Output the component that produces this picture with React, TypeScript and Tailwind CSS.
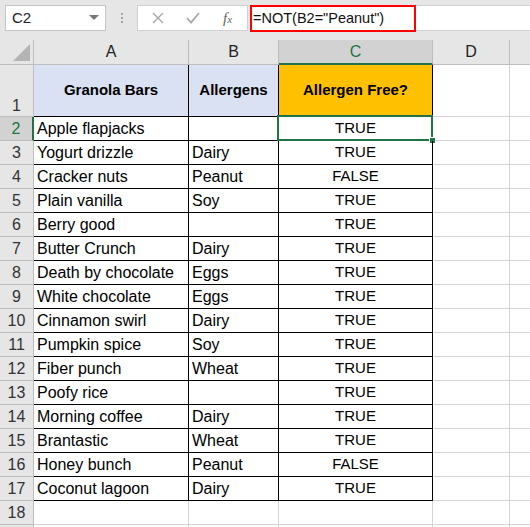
import React from "react";

const data: [string, string, string][] = [
  ["Apple flapjacks", "", "TRUE"],
  ["Yogurt drizzle", "Dairy", "TRUE"],
  ["Cracker nuts", "Peanut", "FALSE"],
  ["Plain vanilla", "Soy", "TRUE"],
  ["Berry good", "", "TRUE"],
  ["Butter Crunch", "Dairy", "TRUE"],
  ["Death by chocolate", "Eggs", "TRUE"],
  ["White chocolate", "Eggs", "TRUE"],
  ["Cinnamon swirl", "Dairy", "TRUE"],
  ["Pumpkin spice", "Soy", "TRUE"],
  ["Fiber punch", "Wheat", "TRUE"],
  ["Poofy rice", "", "TRUE"],
  ["Morning coffee", "Dairy", "TRUE"],
  ["Brantastic", "Wheat", "TRUE"],
  ["Honey bunch", "Peanut", "FALSE"],
  ["Coconut lagoon", "Dairy", "TRUE"],
];

function RowHeader({ n, selected }: { n: number; selected?: boolean }) {
  return (
    <div
      className={
        selected
          ? "h-[24px] flex items-center justify-center bg-[#d2d2d2] text-[#217346] border-b border-b-[#bdbdbd] border-r-2 border-r-[#217346] text-[16px]"
          : "h-[24px] flex items-center justify-center bg-[#e6e6e6] text-[#333] border-b border-r border-[#bdbdbd] text-[16px]"
      }
    >
      {n}
    </div>
  );
}

export default function App() {
  return (
    <div className="w-[530px] h-[527px] overflow-hidden bg-white font-['Liberation_Sans',Arial,sans-serif] text-black">
      {/* Toolbar */}
      <div className="h-[40px] bg-[#e6e6e6] flex items-start pt-[5px]">
        <div className="ml-[5px] w-[101px] h-[26px] bg-white border border-[#c6c6c6] flex items-center justify-between pl-[6px] pr-[6px]">
          <span className="text-[15px] text-[#222]">C2</span>
          <svg width="10" height="6" viewBox="0 0 10 6">
            <polygon points="0,0 10,0 5,5" fill="#777" />
          </svg>
        </div>
        <div className="w-[31px] h-[26px] flex flex-col items-center justify-center gap-[2px]">
          <div className="w-[2px] h-[2px] bg-[#a6a6a6]" />
          <div className="w-[2px] h-[2px] bg-[#a6a6a6]" />
          <div className="w-[2px] h-[2px] bg-[#a6a6a6]" />
        </div>
        <div className="w-[111px] h-[26px] bg-white border border-[#d0d0d0] flex items-center">
          <div className="w-[40px] flex justify-center">
            <svg width="12" height="12" viewBox="0 0 12 12">
              <path d="M1 1 L11 11 M11 1 L1 11" stroke="#a8a8a8" strokeWidth="1.4" fill="none" />
            </svg>
          </div>
          <div className="w-[30px] flex justify-center">
            <svg width="14" height="12" viewBox="0 0 14 12">
              <path d="M1 6 L5 10.5 L13 1" stroke="#a8a8a8" strokeWidth="1.8" fill="none" />
            </svg>
          </div>
          <div className="flex-1 flex justify-center">
            <span className="font-['Liberation_Serif',serif] italic text-[15px] text-[#666] leading-none">
              f<span className="text-[11px]">x</span>
            </span>
          </div>
        </div>
        <div className="ml-[2px] flex-1 h-[26px] bg-white border-y border-[#d0d0d0]">
          <div className="w-[166px] h-[27px] -mt-[1px] border-2 border-[#ff0000] flex items-center pl-[1px] text-[14.5px] text-[#111]">
            =NOT(B2="Peanut")
          </div>
        </div>
      </div>

      {/* Grid */}
      <div className="grid grid-cols-[34px_155px_90px_154px_77px_1fr]">
        {/* Column headers */}
        <div className="h-[25px] bg-[#e6e6e6] border-r border-b border-[#bdbdbd] relative">
          <svg className="absolute right-[3px] bottom-[3px]" width="17" height="17" viewBox="0 0 17 17">
            <polygon points="17,0 17,17 0,17" fill="#b4b4b4" />
          </svg>
        </div>
        <div className="h-[25px] bg-[#e6e6e6] border-r border-b border-[#bdbdbd] flex items-center justify-center text-[16px] text-[#222]">A</div>
        <div className="h-[25px] bg-[#e6e6e6] border-r border-b border-[#bdbdbd] flex items-center justify-center text-[16px] text-[#222]">B</div>
        <div className="h-[25px] bg-[#d2d2d2] border-r border-r-[#bdbdbd] border-b-2 border-b-[#217346] flex items-center justify-center text-[16px] text-[#217346]">C</div>
        <div className="h-[25px] bg-[#e6e6e6] border-r border-b border-[#bdbdbd] flex items-center justify-center text-[16px] text-[#222]">D</div>
        <div className="h-[25px] bg-[#e6e6e6] border-b border-[#bdbdbd]" />

        {/* Row 1 */}
        <div className="h-[52px] bg-[#e6e6e6] border-r border-b border-[#bdbdbd] flex items-end justify-center text-[16px] leading-[20px] text-[#333]">1</div>
        <div className="h-[52px] bg-[#d9e1f2] border-r border-b border-black flex items-center justify-center font-bold text-[15px]">Granola Bars</div>
        <div className="h-[52px] bg-[#d9e1f2] border-r border-b border-black flex items-center justify-center font-bold text-[15px]">Allergens</div>
        <div className="h-[52px] bg-[#ffc000] border-r border-b border-black flex items-center justify-center font-bold text-[15px]">Allergen Free?</div>
        <div className="h-[52px] border-r border-b border-[#d4d4d4]" />
        <div className="h-[52px] border-b border-[#d4d4d4]" />

        {data.map(([a, b, c], i) => {
          const n = i + 2;
          return (
            <React.Fragment key={n}>
              <RowHeader n={n} selected={n === 2} />
              <div className="h-[24px] border-r border-b border-black flex items-center pl-[3px] text-[16px] whitespace-nowrap overflow-hidden">{a}</div>
              <div className="h-[24px] border-r border-b border-black flex items-center pl-[3px] text-[16px] whitespace-nowrap">{b}</div>
              <div className="h-[24px] border-r border-b border-black flex items-center justify-center text-[15px] relative">
                {c}
                {n === 2 && (
                  <>
                    <div className="absolute -left-[2px] -top-[2px] w-[156px] h-[26px] border-2 border-[#217346]" />
                    <div className="absolute -right-[4px] -bottom-[4px] w-[7px] h-[7px] bg-[#217346] border border-white" />
                  </>
                )}
              </div>
              <div className="h-[24px] border-r border-b border-[#d4d4d4]" />
              <div className="h-[24px] border-b border-[#d4d4d4]" />
            </React.Fragment>
          );
        })}

        {/* Row 18 */}
        <RowHeader n={18} />
        <div className="h-[24px] border-r border-b border-[#d4d4d4]" />
        <div className="h-[24px] border-r border-b border-[#d4d4d4]" />
        <div className="h-[24px] border-r border-b border-[#d4d4d4]" />
        <div className="h-[24px] border-r border-b border-[#d4d4d4]" />
        <div className="h-[24px] border-b border-[#d4d4d4]" />
        {/* Row 19 partial */}
        <div className="h-[24px] bg-[#e6e6e6] border-r border-[#bdbdbd]" />
        <div className="h-[24px] border-r border-[#d4d4d4]" />
        <div className="h-[24px] border-r border-[#d4d4d4]" />
        <div className="h-[24px] border-r border-[#d4d4d4]" />
        <div className="h-[24px] border-r border-[#d4d4d4]" />
        <div className="h-[24px]" />
      </div>
    </div>
  );
}
